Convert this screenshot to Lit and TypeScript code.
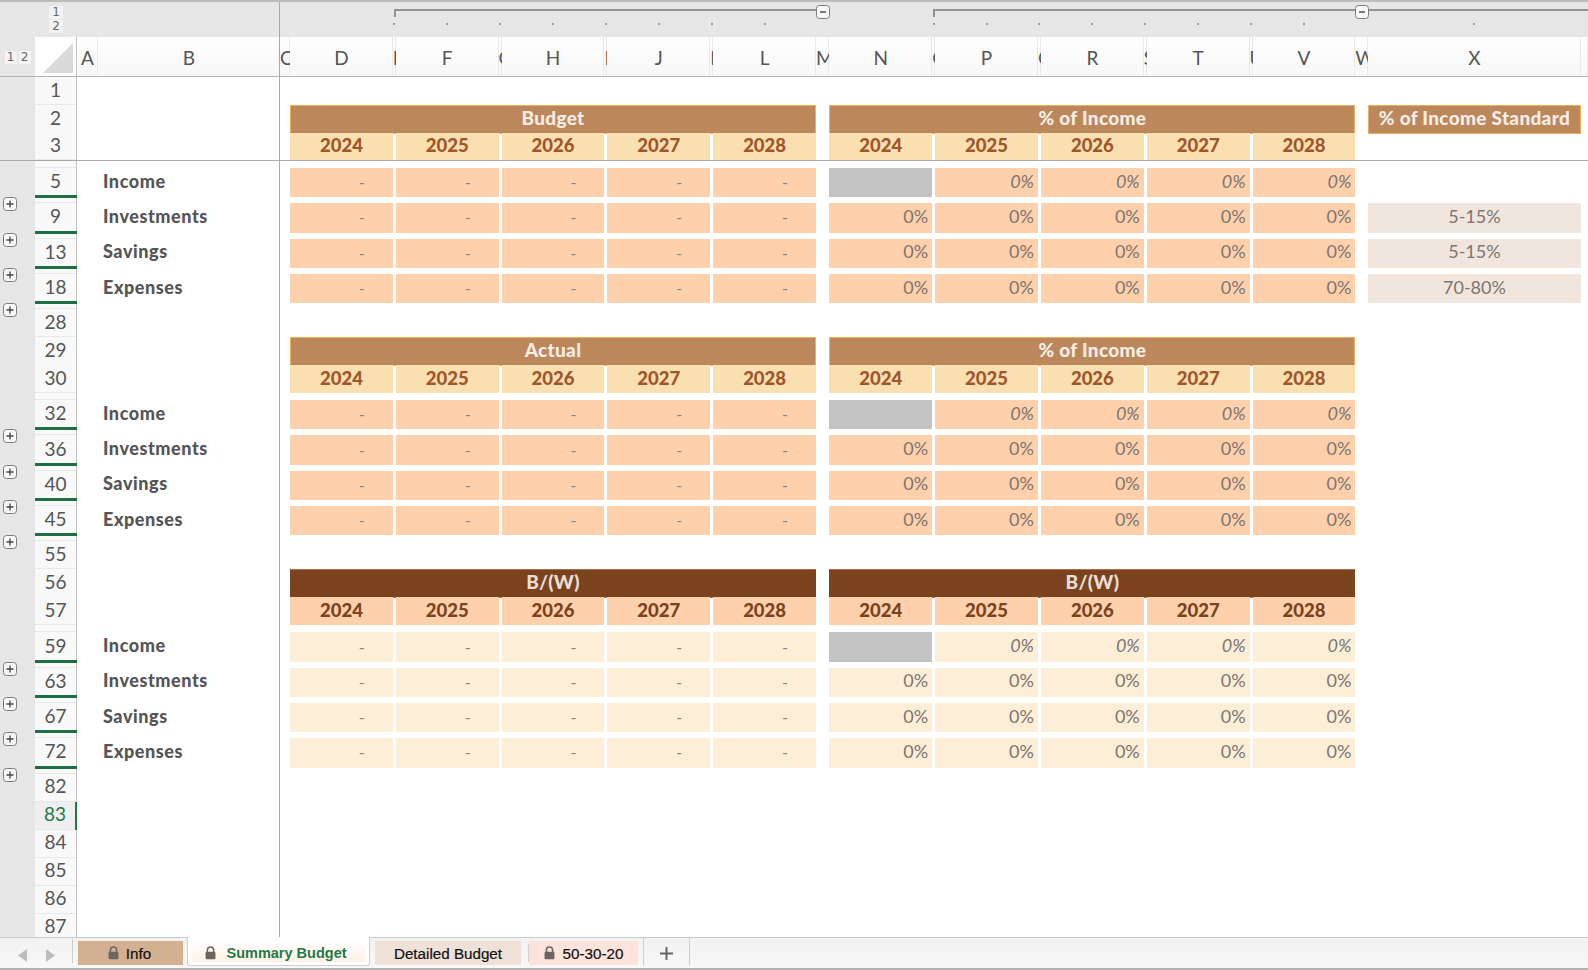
import { LitElement, html, css, nothing } from "lit";
import { customElement } from "lit/decorators.js";

const YEARS = ["2024", "2025", "2026", "2027", "2028"];
const LETTERS = "ABCDEFGHIJKLMNOPQRSTUVWX".split("");
const WIDE_LETTERS = "ABDFHJLNPRTVX";
const LABELS = ["Income", "Investments", "Savings", "Expenses"];
const STANDARD = ["", "5-15%", "5-15%", "70-80%"];

// grid column numbers of the year columns (D F H J L / N P R T V)
const LEFT_COLS = [6, 8, 10, 12, 14];
const RIGHT_COLS = [16, 18, 20, 22, 24];
const X_COL = 26;

const BLOCKS = [
  { title: "Budget", right: "% of Income", head: [1, 2, 3], data: [5, 9, 13, 18], tone: "" },
  { title: "Actual", right: "% of Income", head: [28, 29, 30], data: [32, 36, 40, 45], tone: "" },
  { title: "B/(W)", right: "B/(W)", head: [55, 56, 57], data: [59, 63, 67, 72], tone: "dark" },
];

const lock = html`<svg class="lock" viewBox="0 0 12 15"><path d="M2.6 6.5V4.4a3.4 3.4 0 0 1 6.8 0v2.1" fill="none" stroke="currentColor" stroke-width="1.7"/><rect x="0.6" y="6.2" width="10.8" height="8.2" rx="1.4" fill="currentColor"/></svg>`;

@customElement("app-root")
export class AppRoot extends LitElement {
  static styles = css`
    :host {
      display: flex;
      flex-direction: column;
      width: 1588px;
      height: 970px;
      overflow: hidden;
      background: #fff;
      font-family: Lato, "Open Sans", sans-serif;
      color: #555;
      --cols: 35px 42px 21px 182px 10px repeat(4, 102.8px 3px) 102.8px 13.4px repeat(4, 102.8px 3px) 102.8px 12.6px 213px 1fr;
      --freeze: #a9a9a9;
    }
    /* outline bar */
    .outline {
      display: grid;
      grid-template-columns: var(--cols);
      grid-template-rows: 15px 20px;
      height: 37px;
      box-sizing: border-box;
      border-top: 2px solid #bdbdbd;
      background: #e6e6e6;
      flex: none;
    }
    .levels {
      grid-column: 2;
      grid-row: 1 / 3;
      display: flex;
      flex-direction: column;
      align-items: center;
      justify-content: flex-start;
      gap: 1px;
      padding-top: 4px;
    }
    .lvl {
      width: 14px;
      height: 13px;
      background: #f3f3f3;
      font-size: 12px;
      line-height: 13px;
      text-align: center;
      color: #666;
      font-family: "DejaVu Sans", sans-serif;
    }
    .freeze-top {
      grid-column: 4;
      grid-row: 1 / 3;
      justify-self: end;
      width: 1px;
      background: var(--freeze);
    }
    .line {
      margin-top: 7px;
      height: 6px;
      border-top: 2px solid #929292;
      border-left: 2px solid #929292;
      margin-left: 1px;
      grid-row: 1;
    }
    .line.plain { border-left: 0; margin-left: 0; height: 0; }
    .minus {
      grid-row: 1;
      margin-top: 3px;
      margin-left: 1px;
      justify-self: center;
      width: 14px;
      height: 14px;
      z-index: 1;
    }
    .dot {
      grid-row: 2;
      justify-self: center;
      width: 2px;
      height: 2px;
      margin-top: 6px;
      background: #999;
    }
    /* column letters */
    .letters {
      display: grid;
      grid-template-columns: var(--cols);
      height: 40px;
      box-sizing: border-box;
      border-bottom: 1px solid #b5b5b5;
      flex: none;
    }
    .gutter-head {
      background: #e6e6e6;
      display: flex;
      justify-content: center;
      align-items: flex-start;
      gap: 2px;
      padding-top: 14px;
      overflow: hidden;
    }
    .gutter-head .lvl { width: 12px; }
    .corner {
      background: #fff;
      border-right: 1px solid #c4c4c4;
      display: flex;
    }
    .corner svg { width: 41px; height: 39px; }
    .letter {
      display: flex;
      align-items: center;
      justify-content: center;
      overflow: hidden;
      padding-top: 1px;
      box-sizing: border-box;
      font-size: 19px;
      color: #555;
      background: linear-gradient(#fff, #f7f7f7);
      box-shadow: inset -1px 0 0 #e9e9e9;
    }
    .letter.narrow { justify-content: flex-start; }
    .letter.b { box-shadow: inset -1px 0 0 var(--freeze); }
    /* sheet body */
    .body {
      flex: 1;
      min-height: 0;
      overflow: hidden;
    }
    .row {
      display: grid;
      grid-template-columns: var(--cols);
      box-sizing: border-box;
    }
    .r-std { height: 28px; }
    .r-freeze { border-bottom: 1px solid var(--freeze); }
    .r-data { height: 29.3px; }
    .r-gap { height: 6px; }
    .r-sub { height: 7px; }
    .gut {
      grid-column: 1;
      background: #e6e6e6;
      position: relative;
    }
    .num {
      grid-column: 2;
      position: relative;
      display: flex;
      align-items: center;
      justify-content: center;
      padding-bottom: 4px;
      font-size: 19px;
      color: #555;
      background: #f9f9f9;
      box-sizing: border-box;
      border-right: 1px solid #c4c4c4;
      box-shadow: inset 0 -1px 0 #e8e8e8;
    }
    .num.sel {
      color: #1f7a46;
      background: #efefef;
      border-right: 2px solid #1f7a46;
    }
    .num.marked::after {
      content: "";
      position: absolute;
      left: 0;
      right: -1px;
      bottom: -1px;
      height: 3px;
      z-index: 1;
      background: #1b7043;
    }
    .label {
      grid-column: 4;
      display: flex;
      align-items: center;
      padding: 0 0 4px 5px;
      box-sizing: border-box;
      border-right: 1px solid var(--freeze);
      font-size: 18px;
      font-weight: 900;
      letter-spacing: 0.55px;
      color: #555;
    }
    .plus {
      position: absolute;
      left: 3px;
      top: 0;
      width: 14px;
      height: 14px;
      z-index: 2;
    }
    .title {
      display: flex;
      align-items: center;
      justify-content: center;
      box-sizing: border-box;
      padding-bottom: 4px;
      background: #bd875c;
      border: 1px solid #ecb05f;
      color: #f6eee6;
      font-size: 19px;
      font-weight: 900;
      letter-spacing: 0.3px;
    }
    .title.dark {
      background: #7a431d;
      border-color: #a9704a;
      border-left-color: #7a431d;
      border-right-color: #7a431d;
      color: #e9ded5;
    }
    .year {
      display: flex;
      align-items: center;
      justify-content: center;
      padding-bottom: 3px;
      box-sizing: border-box;
      background: #fadfb0;
      color: #a0562a;
      font-size: 18.5px;
      font-weight: 900;
    }
    .year.dark {
      background: #ffd0ac;
      color: #7a431d;
    }
    .cell {
      display: flex;
      align-items: center;
      justify-content: flex-end;
      box-sizing: border-box;
      padding: 0 4px 4px 0;
      background: #ffd0ac;
      color: #7c7570;
      font-size: 18px;
    }
    .cell.dark { background: #fdeed8; }
    .cell.dash { padding-right: 28px; padding-bottom: 2px; color: #8a8480; font-size: 16px; }
    .cell.it { font-style: italic; }
    .cell.blank { background: #c3c3c3; }
    .std {
      display: flex;
      align-items: center;
      justify-content: center;
      box-sizing: border-box;
      padding-bottom: 4px;
      background: #f1e6de;
      color: #7c7570;
      font-size: 18px;
    }
    /* sheet tabs */
    .tabs {
      flex: none;
      height: 33px;
      box-sizing: border-box;
      display: flex;
      border-top: 1px solid #c9c9c9;
      border-bottom: 2px solid #b3b3b3;
      background: linear-gradient(#f2f2f2, #f8f8f8);
      font-family: "Liberation Sans", Arial, sans-serif;
      font-size: 15.2px;
      color: #111;
      -webkit-text-stroke: 0.2px currentColor;
    }
    .nav {
      width: 73px;
      display: flex;
      align-items: center;
      gap: 19px;
      padding-left: 18px;
      box-sizing: border-box;
      border-right: 1px solid #cfcfcf;
      height: 24px;
      margin-top: 1px;
      padding-top: 8px;
    }
    .nav svg { width: 9px; height: 13px; }
    .tab {
      display: flex;
      align-items: center;
      justify-content: center;
      gap: 7px;
      height: 24px;
      margin-top: 3px;
      flex: none;
    }
    .tab .lock { width: 11px; height: 14px; color: #6b6460; -webkit-text-stroke: 0; }
    .t-info { width: 105px; margin-left: 5px; padding-right: 2px; box-sizing: border-box; background: #d3b092; }
    .t-active {
      width: 183px;
      height: 29px;
      margin: -1px 0 0 4px;
      padding: 3px 4px 3px;
      box-sizing: border-box;
      background: #fff;
      border: 1px solid #cfcfcf;
      border-top: 0;
      border-radius: 0 0 3px 3px;
      color: #1f7a46;
      font-weight: 700;
      font-size: 14.5px;
      -webkit-text-stroke: 0;
    }
    .t-active .inner {
      flex: 1;
      align-self: stretch;
      display: flex;
      align-items: center;
      justify-content: center;
      gap: 10px;
      box-sizing: border-box;
      padding: 3px 5px 0 0;
      background: linear-gradient(#fff, #fff0e4);
    }
    .t-detail { width: 146px; margin-left: 5px; background: #efe1d8; }
    .t-fifty {
      width: 109px;
      margin-left: 8px;
      gap: 8px;
      background: #fce4dc;
      box-shadow: -4px 0 0 -3px #cfcfcf;
    }
    .sep {
      width: 1px;
      height: 28px;
      background: #cfcfcf;
      flex: none;
    }
    .sep.first { margin-left: 5px; }
    .add {
      width: 45px;
      display: flex;
      align-items: center;
      justify-content: center;
      flex: none;
    }
    .add svg { width: 13px; height: 13px; }
  `;

  private outlineBar() {
    const dots = [7, 8, 9, 10, 11, 12, 13, 14, 17, 18, 19, 20, 21, 22, 23, 24, 26];
    const box = (cls: string, col: number) => html`<svg class=${cls} style="grid-column:${col}" viewBox="0 0 14 14">
      <rect x="0.5" y="0.5" width="13" height="13" rx="3" fill="#f7f7f7" stroke="#7b7b7b"/>
      <path d="M4 7h6" stroke="#444" stroke-width="1.4"/></svg>`;
    return html`<div class="outline">
      <div class="levels"><div class="lvl">1</div><div class="lvl">2</div></div>
      <div class="freeze-top"></div>
      <div class="line" style="grid-column:7 / 15"></div>
      ${box("minus", 15)}
      <div class="line" style="grid-column:17 / 25"></div>
      ${box("minus", 25)}
      <div class="line plain" style="grid-column:26 / 28"></div>
      ${dots.map((c) => html`<div class="dot" style="grid-column:${c}"></div>`)}
    </div>`;
  }

  private letterBar() {
    return html`<div class="letters">
      <div class="gutter-head"><div class="lvl">1</div><div class="lvl">2</div></div>
      <div class="corner">
        <svg viewBox="0 0 41 39"><path d="M7 37 38 6V36H7Z" fill="#d9d9d9"/></svg>
      </div>
      ${LETTERS.map((l) => html`<div class="letter ${l === "B" ? "b" : ""} ${WIDE_LETTERS.includes(l) ? "" : "narrow"}"><span>${l}</span></div>`)}
      <div class="letter"></div>
    </div>`;
  }

  // a sheet row with its gutter, number and frozen column edge
  private row(cls: string, num: unknown, content: unknown = nothing, label = "", opts: { plus?: boolean; marked?: boolean; sel?: boolean } = {}) {
    return html`<div class="row ${cls}">
      <div class="gut">${opts.plus
        ? html`<svg class="plus" viewBox="0 0 14 14"><rect x="0.5" y="0.5" width="13" height="13" rx="3" fill="#f7f7f7" stroke="#7b7b7b"/><path d="M3.5 7h7M7 3.5v7" stroke="#444" stroke-width="1.3"/></svg>`
        : nothing}</div>
      <div class="num ${opts.marked ? "marked" : ""} ${opts.sel ? "sel" : ""}">${num}</div>
      <div class="label">${label}</div>
      ${content}
    </div>`;
  }

  private block(b: (typeof BLOCKS)[number], first: boolean) {
    const dark = b.tone;
    const years = [...LEFT_COLS, ...RIGHT_COLS].map(
      (c, i) => html`<div class="year ${dark}" style="grid-column:${c}">${YEARS[i % 5]}</div>`
    );
    return html`
      ${this.row("r-std", b.head[0])}
      ${this.row("r-std", b.head[1], html`
        <div class="title ${dark}" style="grid-column:6 / 15">${b.title}</div>
        <div class="title ${dark}" style="grid-column:16 / 25">${b.right}</div>
        ${first ? html`<div class="title" style="grid-column:${X_COL}">% of Income Standard</div>` : nothing}
      `)}
      ${this.row(first ? "r-std r-freeze" : "r-std", b.head[2], years)}
      ${this.row("r-sub", "")}
      ${b.data.map((n, r) => html`
        ${this.row("r-data", n, html`
          ${LEFT_COLS.map((c) => html`<div class="cell dash ${dark}" style="grid-column:${c}">-</div>`)}
          ${RIGHT_COLS.map((c, i) =>
            r === 0 && i === 0
              ? html`<div class="cell blank" style="grid-column:${c}"></div>`
              : html`<div class="cell ${dark} ${r === 0 ? "it" : ""}" style="grid-column:${c}">0%</div>`
          )}
          ${first && STANDARD[r] ? html`<div class="std" style="grid-column:${X_COL}">${STANDARD[r]}</div>` : nothing}
        `, LABELS[r], { marked: true })}
        ${this.row("r-gap", "", nothing, "", { plus: true })}
      `)}
    `;
  }

  private tabBar() {
    return html`<div class="tabs">
      <div class="nav">
        <svg viewBox="0 0 9 13"><path d="M9 0V13L0 6.5Z" fill="#bdbdbd"/></svg>
        <svg viewBox="0 0 9 13"><path d="M0 0V13L9 6.5Z" fill="#bdbdbd"/></svg>
      </div>
      <div class="tab t-info">${lock}<span>Info</span></div>
      <div class="tab t-active"><div class="inner">${lock}<span>Summary Budget</span></div></div>
      <div class="tab t-detail"><span>Detailed Budget</span></div>
      <div class="tab t-fifty">${lock}<span>50-30-20</span></div>
      <div class="sep first"></div>
      <div class="add"><svg viewBox="0 0 13 13"><path d="M6.5 0v13M0 6.5h13" stroke="#666" stroke-width="2"/></svg></div>
      <div class="sep"></div>
    </div>`;
  }

  render() {
    return html`
      ${this.outlineBar()}
      ${this.letterBar()}
      <div class="body">
        ${BLOCKS.map((b, i) => this.block(b, i === 0))}
        ${[82, 83, 84, 85, 86, 87].map((n) => this.row("r-std", n, nothing, "", { sel: n === 83 }))}
      </div>
      ${this.tabBar()}
    `;
  }
}
